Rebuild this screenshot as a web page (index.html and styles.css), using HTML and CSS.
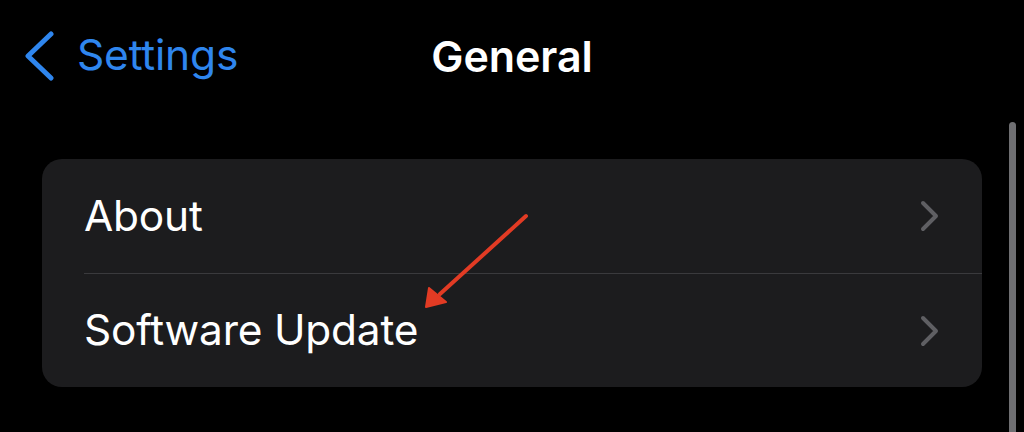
FILE: index.html
```html
<!DOCTYPE html>
<html lang="en">
<head>
<meta charset="utf-8">
<title>General</title>
<link rel="stylesheet" href="styles.css">
</head>
<body>
<div class="screen">
  <header class="nav">
    <a class="back">
      <svg class="back-icon" width="30" height="50" viewBox="0 0 30 50" aria-hidden="true">
        <path d="M27 3 L4 25 L27 47" fill="none" stroke="#2f86ee" stroke-width="5" stroke-linecap="round" stroke-linejoin="round"/>
      </svg>
      <span class="back-label">Settings</span>
    </a>
    <h1 class="title">General</h1>
    <div class="spacer"></div>
  </header>

  <main class="content">
    <ul class="group">
      <li class="row">
        <span class="row-label">About</span>
        <svg class="chev" width="20" height="32" viewBox="0 0 20 32" aria-hidden="true">
          <path d="M3 3 L16 16 L3 29" fill="none" stroke="#5f5f63" stroke-width="4" stroke-linecap="round" stroke-linejoin="round"/>
        </svg>
      </li>
      <li class="row">
        <span class="row-label">Software Update</span>
        <svg class="chev" width="20" height="32" viewBox="0 0 20 32" aria-hidden="true">
          <path d="M3 3 L16 16 L3 29" fill="none" stroke="#5f5f63" stroke-width="4" stroke-linecap="round" stroke-linejoin="round"/>
        </svg>
      </li>
    </ul>
  </main>

  <div class="scrollbar"></div>

  <svg class="annotation" width="1024" height="432" viewBox="0 0 1024 432" aria-hidden="true">
    <line x1="526" y1="216" x2="440" y2="294" stroke="#e23b24" stroke-width="4" stroke-linecap="round"/>
    <polygon points="426,307 429,288 446,302" fill="#e23b24" stroke="#e23b24" stroke-width="2" stroke-linejoin="round"/>
  </svg>
</div>
</body>
</html>
```

FILE: styles.css
```css
* {
  box-sizing: border-box;
}

html, body {
  margin: 0;
  padding: 0;
  background: #000;
}

body {
  width: 1024px;
  height: 432px;
  overflow: hidden;
  font-family: "Inter", "Liberation Sans", sans-serif;
  color: #fff;
}

.screen {
  position: relative;
  width: 1024px;
  height: 432px;
}

.nav {
  display: grid;
  grid-template-columns: 1fr auto 1fr;
  align-items: center;
  height: 112px;
  padding: 0 24px;
}

.back {
  display: flex;
  align-items: center;
  gap: 23px;
  color: #2f86ee;
  padding-bottom: 1px;
}

.back-icon {
  display: block;
  margin-top: 1px;
}

.back-label {
  font-size: 42.5px;
  font-weight: 400;
  letter-spacing: -0.2px;
  line-height: 1;
}

.title {
  margin: 0;
  font-size: 43px;
  font-weight: 600;
  letter-spacing: -0.1px;
  line-height: 1;
  color: #fff;
}

.content {
  padding: 47px 42px 0 42px;
}

.group {
  list-style: none;
  margin: 0;
  padding: 0 0 0 42px;
  background: #1c1c1e;
  border-radius: 20px;
  overflow: hidden;
}

.row {
  display: flex;
  align-items: center;
  justify-content: space-between;
  height: 114px;
  padding-right: 42px;
}

.row + .row {
  border-top: 1px solid #3a3a3d;
}

.row-label {
  font-size: 42.4px;
  font-weight: 400;
  letter-spacing: -0.2px;
  line-height: 1;
  color: #fff;
}

.chev {
  display: block;
}

.scrollbar {
  position: absolute;
  left: 1009px;
  top: 122px;
  width: 7px;
  height: 320px;
  border-radius: 4px;
  background: #6f6f72;
}

.annotation {
  position: absolute;
  left: 0;
  top: 0;
  pointer-events: none;
}
```
